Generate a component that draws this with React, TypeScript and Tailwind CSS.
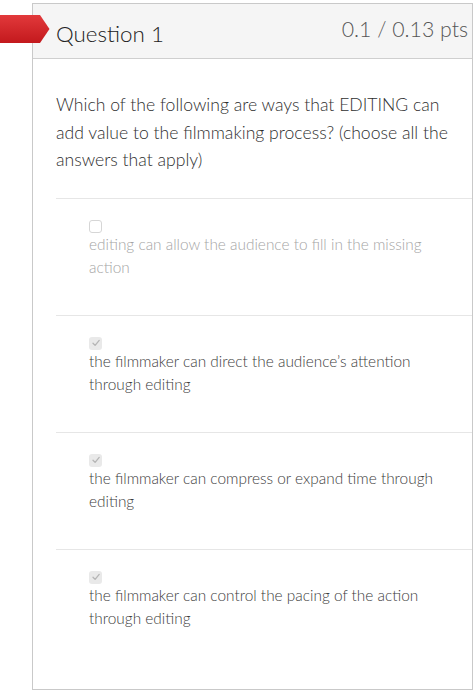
import React from 'react';

const ANSWERS = [
  { text: 'editing can allow the audience to fill in the missing action', checked: false },
  { text: 'the filmmaker can direct the audience\u2019s attention through editing', checked: true },
  { text: 'the filmmaker can compress or expand time through editing', checked: true },
  { text: 'the filmmaker can control the pacing of the action through editing', checked: true },
];

function Box({ checked }: { checked: boolean }) {
  if (!checked) {
    return <div className="w-[13px] h-[13px] rounded-[3px] border border-[#d6d6d6] bg-white" />;
  }
  return (
    <div className="w-[13px] h-[13px] rounded-[3px] bg-[#e9e9e9] flex items-center justify-center">
      <svg width="10" height="10" viewBox="0 0 10 10" fill="none">
        <path d="M2 5.2 L4.1 7.4 L8.2 2.4" stroke="#b5b5b5" strokeWidth="1.3" strokeLinecap="round" strokeLinejoin="round" />
      </svg>
    </div>
  );
}

export default function App() {
  return (
    <div className="w-[476px] h-[700px] bg-white relative overflow-hidden" style={{ fontFamily: 'Lato, "Open Sans", sans-serif' }}>
      {/* red question flag */}
      <div className="absolute left-0 top-[15px] h-[28px] w-[50px] z-10">
        <svg width="50" height="28" viewBox="0 0 50 28">
          <defs>
            <linearGradient id="flag" x1="0" y1="0" x2="0" y2="1">
              <stop offset="0" stopColor="#e2393b" />
              <stop offset="1" stopColor="#c3191d" />
            </linearGradient>
          </defs>
          <path d="M0 0 H40 L49.5 14 L40 28 H0 Z" fill="url(#flag)" />
        </svg>
      </div>

      <div className="pt-[3px] pl-[32px]">
        <div className="w-[441px] h-[687px] border border-[#c9c9c9] flex flex-col">
          <div className="h-[55px] bg-[#f5f5f5] border-b border-[#cfcfcf] flex items-center justify-between pl-[23px] pr-[4px]">
            <span className="text-[22.4px] font-light text-[#222] pt-[6px]">Question 1</span>
            <span className="text-[21.3px] font-light text-[#555] -mt-[2px]">0.1 / 0.13 pts</span>
          </div>

          <div className="pl-[23px]">
            <p className="pt-[32px] pr-[6px] text-[17.6px] leading-[27.5px] text-[#2f2f2f] font-light">
              Which of the following are ways that EDITING can add value to the filmmaking process? (choose all the answers that apply)
            </p>
            <div className="mt-[24px]">
              {ANSWERS.map((a) => (
                <div key={a.text} className="border-t border-[#e6e6e6]">
                  <div className="pl-[33px] pr-[24px] pt-[21px] pb-[36px]">
                    <Box checked={a.checked} />
                    <p className={`text-[15.4px] leading-[23px] font-light ${a.checked ? 'text-[#3d3d3d]' : 'text-[#a5a5a5]'}`}>
                      {a.text}
                    </p>
                  </div>
                </div>
              ))}
            </div>
          </div>
        </div>
      </div>
    </div>
  );
}
